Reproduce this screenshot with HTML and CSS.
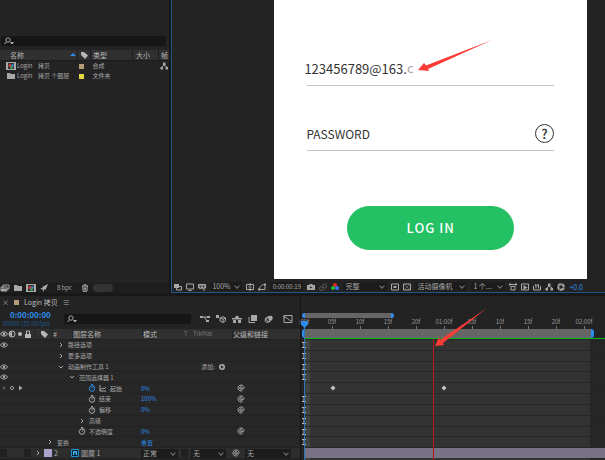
FILE: index.html
```html
<!DOCTYPE html>
<html lang="zh-CN">

<head>
  <meta charset="UTF-8">
  <meta name="viewport" content="width=device-width, initial-scale=1.0">
  <title>Login 拷贝</title>
  <link rel="stylesheet" href="styles.css">
</head>

<body>
  <svg class="sprite" aria-hidden="true">
    <symbol id="search" viewBox="0 0 10 8"><circle cx="4" cy="3" r="2.2"/><path d="M2.5 4.6L.5 7M6.5 5.5h3L8 7z"/></symbol>
    <symbol id="eye" viewBox="0 0 8 8"><path d="M.5 4C2 1.3 6 1.3 7.500 4C6 6.700 2 6.700 .5 4z"/><circle class="solid" cx="4" cy="4" r="1.200"/></symbol>
    <symbol id="tag" viewBox="0 0 8 8"><path class="solid" d="M1 1h3l4 3.500L5 8L1 4z"/></symbol>
    <symbol id="right" viewBox="0 0 8 8"><path d="M3 2l2 2-2 2"/></symbol>
    <symbol id="down" viewBox="0 0 8 8"><path d="M2 3l2 2 2-2"/></symbol>
    <symbol id="watch" viewBox="0 0 8 8"><circle cx="4" cy="4.600" r="2.700"/><path d="M3 .6h2M4 .6v1.300M4 4.600l1-1.500M6 1.500l.8.8"/></symbol>
    <symbol id="spiral" viewBox="0 0 8 8"><path d="M5.300 4A1.300 1.300 0 1 1 4 2.700C5 2.700 5.300 3.500 5.200 4.500C5.600 5.500 7 5 7 3.500C6.800 1.800 5.600 1 4 1A3 3 0 1 0 5.500 6.600"/></symbol>
    <symbol id="tree" viewBox="0 0 8 8"><path class="solid" d="M3 .5h2.500V3H3zM.5 5H3v2.500H.5zM5.500 5H8v2.500H5.500z"/><path d="M4 3L2 5M4 3l3 2"/></symbol>
    <symbol id="folder" viewBox="0 0 8 8"><path class="solid" d="M0 1h3l1 1h4v5H0z"/></symbol>
    <symbol id="comp" viewBox="0 0 10 8"><path class="solid" d="M0 0h10v8H0z"/><path fill="#333" stroke="none" d="M2 1h6v6H2z"/><circle cx="4" cy="3.500" r="1.500" fill="#d33" stroke="none"/><circle cx="6.500" cy="3.500" r="1.300" fill="#38c" stroke="none"/><circle cx="5.500" cy="5.500" r="1.300" fill="#3a6" stroke="none"/></symbol>
    <symbol id="ibeam" viewBox="0 0 4 8"><path d="M0 1.500h4M0 6.500h4M2 1.500v5"/></symbol>
    <symbol id="diamond" viewBox="0 0 6 6"><path class="solid" d="M3 .5L5.500 3L3 5.500L.5 3z"/></symbol>
  </svg>

  <main class="workspace">
    <section class="project">
      <label class="search project-search">
        <svg class="wide"><use href="#search"/></svg>
        <input type="search" aria-label="搜索项目">
      </label>
      <table class="files">
        <thead>
          <tr>
            <th class="col-name"><span>名称</span><i class="sort"></i></th>
            <th class="col-tag"><svg><use href="#tag"/></svg></th>
            <th class="col-type">类型</th>
            <th class="col-size">大小</th>
            <th class="col-frame">帧</th>
          </tr>
        </thead>
        <tbody>
          <tr>
            <td><span class="file"><svg class="wide"><use href="#comp"/></svg><b>Login</b>拷贝</span></td>
            <td><i class="swatch tan"></i></td>
            <td>合成</td>
            <td></td>
            <td><svg><use href="#tree"/></svg></td>
          </tr>
          <tr>
            <td><span class="file"><svg class="wide"><use href="#folder"/></svg><b>Login</b>拷贝 个图层</span></td>
            <td><i class="swatch yellow"></i></td>
            <td>文件夹</td>
            <td></td>
            <td></td>
          </tr>
        </tbody>
      </table>
      <footer class="project-bar">
        <button aria-label="解释素材"><svg class="wide" viewBox="0 0 10 8"><path d="M3 1h6v4H3zM1 3h6v4H1z"/><path class="solid" d="M1 5h5v2H1z"/></svg></button>
        <button aria-label="新建文件夹"><svg><use href="#folder"/></svg></button>
        <button aria-label="新建合成"><svg class="wide"><use href="#comp"/></svg></button>
        <button aria-label="项目设置"><svg viewBox="0 0 8 8"><path class="solid" d="M8 0L5.500 6L4.500 5L3 8L2.500 5.500L0 4.500L3 3.800L2 3z"/></svg></button>
        <button class="depth-button">8 bpc</button>
        <button aria-label="删除"><svg viewBox="0 0 8 8"><path d="M1 2h6M3 2V.7h2V2M1.700 2l.4 5.300h3.800L6.300 2M3.300 3.300v3M4.700 3.300v3"/></svg></button>
        <i class="pill"></i>
      </footer>
    </section>

    <section class="viewer">
      <div class="stage">
        <form class="login">
          <div class="field">
            <input class="email" type="text" aria-label="Email" value="123456789@163."><span class="typing">c</span>
          </div>
          <div class="field">
            <input class="password" type="password" aria-label="Password" placeholder="PASSWORD">
            <button class="help" type="button" aria-label="Help">?</button>
          </div>
          <button class="submit" type="button">LOG IN</button>
        </form>
        <svg class="arrow arrow-email" viewBox="0 0 74 32"><path d="M0 30L6 23L8 25.500L74 0L10 29L11 31z"/></svg>
      </div>
      <footer class="viewer-bar">
        <button aria-label="始终预览"><svg viewBox="0 0 8 8"><path class="solid" d="M0 1h5v4H0z"/><path d="M2.500 3.500h5v3.500h-5z"/></svg></button>
        <button aria-label="主查看器"><svg viewBox="0 0 8 8"><path d="M.5 1h7v5h-7zM2.500 7.500h3"/></svg></button>
        <button aria-label="VR 视图"><svg viewBox="0 0 8 8"><path d="M.5 1.500h7v3.500h-7z"/><circle cx="2.500" cy="4" r="1.500"/><circle cx="5.500" cy="4" r="1.500"/><path class="solid" d="M4.500 6.500h3L6 8z"/></svg></button>
        <span class="select zoom"><select aria-label="放大率"><option>100%</option></select></span>
        <button aria-label="网格"><svg viewBox="0 0 8 8"><path d="M.5 1.500h7v5h-7zM4 0v3M4 5v3M2.500 4h3"/></svg></button>
        <button aria-label="蒙版"><svg viewBox="0 0 8 8"><path d="M2 6.500C1.500 4 3 1.500 7 1.500v5z"/><path class="solid" d="M0 5.500h2v2H0zM6 .5h2v2H6z"/></svg></button>
        <button class="time-small">0:00:00:19</button>
        <button aria-label="快照"><svg viewBox="0 0 8 8"><path class="solid" d="M0 2h2l1-1h2l1 1h2v5H0z"/><circle cx="4" cy="4.500" r="1.400" fill="#222"/></svg></button>
        <button class="dim" aria-label="显示快照"><svg viewBox="0 0 8 8"><circle cx="2.500" cy="5.500" r="2"/><circle cx="5.500" cy="3" r="2"/></svg></button>
        <button aria-label="通道"><svg viewBox="0 0 8 8"><g stroke="none"><circle cx="4" cy="2" r="2" fill="#e22"/><circle cx="2" cy="5" r="2" fill="#2b3"/><circle cx="6" cy="5" r="2" fill="#37f"/></g></svg></button>
        <span class="select quality"><select aria-label="分辨率"><option>完整</option></select></span>
        <button aria-label="目标区域"><svg viewBox="0 0 8 8"><path d="M.5 1h7v6h-7z"/><path class="solid" d="M2.500 3h3v2h-3z"/></svg></button>
        <button aria-label="透明网格"><svg viewBox="0 0 8 8"><path d="M.5 1h7v6h-7z"/><path class="dim" d="M1 1l6 6M7 1L1 7"/></svg></button>
        <span class="select camera"><select aria-label="3D 视图"><option>活动摄像机</option></select></span>
        <span class="select views"><select aria-label="视图布局"><option>1 个...</option></select></span>
        <button aria-label="像素长宽比"><svg viewBox="0 0 8 8"><path d="M0 1.500h8M1 0v3M7 0v3M2 3.500h4v3.500H2z"/></svg></button>
        <button aria-label="快速预览"><svg viewBox="0 0 8 8"><path d="M.5 1h7v6h-7z"/><path class="solid" d="M2.500 2v5L6.500 4.500z"/></svg></button>
        <button aria-label="时间轴"><svg viewBox="0 0 8 8"><path d="M.5 3v4h7V3M3 1.500v4M5.500 1.500v4M2 3l1-2M4.500 3l1-2"/></svg></button>
        <button aria-label="流程图"><svg><use href="#tree"/></svg></button>
        <button class="exposure" aria-label="重置曝光"><svg viewBox="0 0 8 8"><circle cx="4" cy="4" r="2.700" stroke-width="2"/><path stroke="#222" stroke-width=".5" d="M4 0l1 3M8 4L5 5M2 8l1-3M0 3l3 0"/></svg></button>
        <a href="#exposure">+0.0</a>
      </footer>
    </section>
  </main>

  <section class="timeline">
    <div class="layers">
      <header class="tab">
        <span>×</span><i class="swatch tan"></i><h1>Login 拷贝</h1><span>≡</span>
      </header>
      <div class="tools">
        <div class="clock">
          <strong>0:00:00:00</strong>
          <span>00000 (25.00 fps)</span>
        </div>
        <label class="search layer-search">
          <svg class="wide"><use href="#search"/></svg>
          <input type="search" aria-label="搜索图层">
        </label>
        <div class="tool-icons">
          <button aria-label="微型流程图"><svg class="wide" viewBox="0 0 10 8"><path d="M1 2h3l3 4M4 2h4"/><path class="solid" d="M0 1h3v2H0zM7 1h3v2H7zM6 5h3v2H6z"/></svg></button>
          <button aria-label="草图 3D"><svg class="wide" viewBox="0 0 10 8"><path d="M4 3l3-1.300L9.500 3v3L7 7.500L4 6zM4 3l3 1.200L9.500 3M7 4.200v3"/><path class="solid" d="M0 0h3v3H0z"/></svg></button>
          <button aria-label="隐藏图层"><svg class="wide" viewBox="0 0 10 8"><path class="solid" d="M3 3c0-3 4-3 4 0zM0 3h10v1.500H0zM1 5h3v3H1zM6 5h3v3H6z"/></svg></button>
          <button aria-label="帧混合"><svg class="wide" viewBox="0 0 10 8"><path d="M1 2v5.500h6"/><path class="solid" d="M3 0h6v6H3z"/></svg></button>
          <button aria-label="运动模糊"><svg class="wide" viewBox="0 0 10 8"><circle cx="3.500" cy="5" r="2.500"/><circle cx="5" cy="4" r="2.500"/><circle class="solid" cx="6.500" cy="3" r="2.300"/></svg></button>
          <button class="graph" aria-label="图表编辑器"><svg class="wide" viewBox="0 0 10 8"><path d="M1 .5h8v7H1zM1.500 2C4 2 6 6 8.500 6M0 1l2 2"/></svg></button>
        </div>
      </div>
      <div class="columns">
        <span class="switches"><svg><use href="#eye"/></svg><svg viewBox="0 0 8 8"><circle cx="4" cy="4" r="3"/><path class="solid" d="M1 4l3-3v6z"/></svg><svg viewBox="0 0 8 8"><circle class="solid" cx="4" cy="4" r="2"/></svg><svg viewBox="0 0 8 8"><path class="solid" d="M1 4h6v4H1z"/><path d="M2.500 4V1h3v3"/></svg></span>
        <span class="label"><svg><use href="#tag"/></svg></span>
        <span>#</span>
        <span>图层名称</span>
        <span>模式</span>
        <span class="faint">T</span>
        <span class="faint">TrkMat</span>
        <span>父级和链接</span>
      </div>
      <div class="rows">
        <div class="row">
          <span class="switches"><svg><use href="#eye"/></svg></span>
          <span class="prop depth-1"><svg><use href="#right"/></svg>路径选项</span>
        </div>
        <div class="row">
          <span class="switches"></span>
          <span class="prop depth-1"><svg><use href="#right"/></svg>更多选项</span>
        </div>
        <div class="row">
          <span class="switches"><svg><use href="#eye"/></svg></span>
          <span class="prop depth-1"><svg><use href="#down"/></svg>动画制作工具 1</span>
          <span class="value add">添加: <svg viewBox="0 0 8 8"><circle class="solid" cx="4" cy="4" r="3"/><path fill="#222" stroke="none" d="M3 2.200L5.800 4L3 5.800z"/></svg></span>
        </div>
        <div class="row">
          <span class="switches"><svg><use href="#eye"/></svg></span>
          <span class="prop depth-2"><svg><use href="#down"/></svg>范围选择器 1</span>
        </div>
        <div class="row">
          <span class="switches keys"><svg class="dim" viewBox="0 0 8 8"><path class="solid" d="M5 2v4L2 4z"/></svg><svg viewBox="0 0 8 8"><path d="M4 2l2 2-2 2-2-2z"/></svg><svg viewBox="0 0 8 8"><path class="solid" d="M3 1.500v5L6.500 4z"/></svg></span>
          <span class="prop depth-4"><svg class="on"><use href="#watch"/></svg><svg viewBox="0 0 8 8"><path d="M1 1v6h6M1.500 6l2-2 1.500 1 2-2"/></svg>起始</span>
          <span class="value"><a href="#start">0%</a></span>
          <span class="parent"><svg><use href="#spiral"/></svg></span>
        </div>
        <div class="row">
          <span class="switches"></span>
          <span class="prop depth-4"><svg><use href="#watch"/></svg>结束</span>
          <span class="value"><a href="#end">100%</a></span>
          <span class="parent"><svg><use href="#spiral"/></svg></span>
        </div>
        <div class="row">
          <span class="switches"></span>
          <span class="prop depth-4"><svg><use href="#watch"/></svg>偏移</span>
          <span class="value"><a href="#offset">0%</a></span>
          <span class="parent"><svg><use href="#spiral"/></svg></span>
        </div>
        <div class="row">
          <span class="switches"></span>
          <span class="prop depth-3"><svg><use href="#right"/></svg>高级</span>
        </div>
        <div class="row">
          <span class="switches"></span>
          <span class="prop depth-3"><svg><use href="#watch"/></svg>不透明度</span>
          <span class="value"><a href="#opacity">0%</a></span>
          <span class="parent"><svg><use href="#spiral"/></svg></span>
        </div>
        <div class="row">
          <span class="switches"></span>
          <span class="prop depth-0"><svg><use href="#right"/></svg>变换</span>
          <span class="value"><a href="#reset">重置</a></span>
        </div>
        <div class="row layer">
          <span class="switches"><i class="slot"></i><i class="slot last"></i></span>
          <span class="prop"><svg><use href="#right"/></svg><i class="layer-color"></i><em>2</em><svg class="psd" viewBox="0 0 8 8"><path fill="#0b2a40" stroke="#1d8fd0" d="M.5.5h7v7h-7z"/><path stroke="#49b4ee" d="M2.500 6V2.500h3V4h-3M5.500 4v2"/></svg>圖層 1</span>
          <span class="value"><span class="select mode"><select aria-label="模式"><option>正常</option></select></span><i class="slot"></i><span class="select matte"><select aria-label="轨道遮罩"><option>无</option></select></span></span>
          <span class="parent"><svg><use href="#spiral"/></svg><span class="select link"><select aria-label="父级"><option>无</option></select></span></span>
        </div>
      </div>
    </div>

    <div class="time">
      <div class="navigator"></div>
      <div class="ruler">
        <span>:00f</span><span>05f</span><span>10f</span><span>15f</span><span>20f</span><span>01:00f</span><span>05f</span><span>10f</span><span>15f</span><span>20f</span><span>02:00f</span>
      </div>
      <div class="work-area"></div>
      <div class="tracks">
        <div class="track"><svg class="ibeam"><use href="#ibeam"/></svg></div>
        <div class="track"><svg class="ibeam"><use href="#ibeam"/></svg></div>
        <div class="track"><svg class="ibeam"><use href="#ibeam"/></svg></div>
        <div class="track"><svg class="ibeam"><use href="#ibeam"/></svg></div>
        <div class="track"><svg class="key key-5"><use href="#diamond"/></svg><svg class="key key-25"><use href="#diamond"/></svg></div>
        <div class="track"><svg class="ibeam"><use href="#ibeam"/></svg></div>
        <div class="track"><svg class="ibeam"><use href="#ibeam"/></svg></div>
        <div class="track"><svg class="ibeam"><use href="#ibeam"/></svg></div>
        <div class="track"><svg class="ibeam"><use href="#ibeam"/></svg></div>
        <div class="track"><svg class="ibeam"><use href="#ibeam"/></svg></div>
        <div class="track clip"></div>
        <div class="preview-line"></div>
      </div>
      <div class="playhead"></div>
      <svg class="arrow arrow-time" viewBox="0 0 52 38"><path d="M0 38L4 29L5 32L52 0L8 35L9 37z"/></svg>
    </div>
  </section>
</body>

</html>
```

FILE: styles.css
```css
* {
  box-sizing: border-box;
}

body {
  margin: 0;
  height: 100vh;
  display: grid;
  grid-template-rows: 293fr 167fr;
  overflow: hidden;
  background: #181818;
  color: #a8a8a8;
  font: 7px/10px "Noto Sans CJK SC", sans-serif;
}

button, input, select {
  margin: 0;
  padding: 0;
  border: 0;
  background: none;
  color: inherit;
  font: inherit;
  outline: none;
}

a {
  color: #2d8ceb;
  text-decoration: none;
}

svg {
  display: block;
  flex: none;
  width: 8px;
  height: 8px;
  fill: none;
  stroke: currentColor;
  stroke-width: 1;
}

svg.wide {
  width: 10px;
}

.solid {
  fill: currentColor;
  stroke: none;
}

.sprite {
  position: absolute;
  width: 0;
  height: 0;
}

.dim {
  opacity: 0.4;
}

.search {
  display: flex;
  align-items: center;
  height: 10px;
  padding-left: 3px;
  background: #161616;
  border-radius: 2px;
}

.search input {
  flex: 1;
  min-width: 0;
  height: 10px;
}

.swatch {
  display: block;
  width: 5px;
  height: 5px;
}

.tan {
  background: #b39b78;
}

.yellow {
  background: #e4d83c;
}

.select {
  position: relative;
  display: block;
  height: 9px;
  background: #1c1c1c;
}

.select select {
  display: block;
  appearance: none;
  width: 100%;
  height: 9px;
  padding-left: 2px;
  line-height: 9px;
}

.select::after {
  content: "";
  position: absolute;
  right: 3px;
  top: 2px;
  width: 3px;
  height: 3px;
  border: solid #777;
  border-width: 0 1px 1px 0;
  transform: rotate(45deg);
  pointer-events: none;
}

/* project panel */
.workspace {
  display: flex;
  gap: 2px;
  min-height: 0;
}

.project {
  display: flex;
  flex-direction: column;
  width: 28%;
  background: #232323;
}

.project-search {
  margin: 36px 3px 4px 1px;
}

.files {
  width: 100%;
  border-collapse: collapse;
  table-layout: fixed;
  font-size: 6px;
}

.files th {
  height: 10px;
  padding: 0;
  border-bottom: 1px solid #1c1c1c;
  background: #303030;
  color: #b8b8b8;
  font-size: 7px;
  font-weight: normal;
  text-align: left;
  line-height: 10px;
}

.files th + th {
  border-left: 1px solid #1c1c1c;
}

.files td {
  height: 10px;
  padding: 0 0 0 2px;
  line-height: 10px;
}

.files .col-name {
  padding-left: 10px;
}

.col-name span {
  display: inline-block;
  width: 60px;
}

.sort {
  display: inline-block;
  border: solid transparent;
  border-width: 0 3px 3px;
  border-bottom-color: #2d8ceb;
  vertical-align: 2px;
}

.files .col-tag {
  width: 13px;
  padding-left: 2px;
}

.files .col-type {
  width: 42px;
  padding-left: 2px;
}

.files .col-size {
  width: 26px;
  padding-left: 3px;
}

.files .col-frame {
  width: 11px;
  padding-left: 2px;
  overflow: hidden;
}

.file {
  display: flex;
  align-items: center;
  padding-left: 4px;
  white-space: nowrap;
}

.file b {
  width: 22px;
  padding-left: 1px;
  font-weight: normal;
}

.project-bar {
  display: flex;
  align-items: center;
  gap: 4px;
  height: 10px;
  margin-top: auto;
  background: #1e1e1e;
}

.depth-button {
  width: 25px;
  font-size: 6px;
  line-height: 8px;
}

.pill {
  width: 20px;
  height: 8px;
  border-radius: 4px;
  background: #333;
}

/* composition viewer */
.viewer {
  flex: 1;
  min-width: 0;
  display: flex;
  flex-direction: column;
  border: solid #20568c;
  border-width: 0 0 1px 1px;
  background: #232323;
}

.stage {
  position: relative;
  flex: 1;
  margin: 0 18px 2px 102px;
  background: #fff;
  color: #333;
}

.login {
  display: flex;
  flex-direction: column;
  padding: 55px 33px 0;
}

.field {
  display: flex;
  align-items: center;
  height: 31px;
  margin-bottom: 34px;
  padding-bottom: 4px;
  border-bottom: 1px solid #c4c4c4;
}

.email {
  field-sizing: content;
  height: 24px;
  margin-left: -3px;
  font-size: 13px;
}

.typing {
  color: #aaa;
  font-size: 13px;
}

.password {
  flex: 1;
  min-width: 0;
  height: 24px;
  margin-left: -1px;
  font-size: 12px;
}

.password::placeholder {
  color: #333;
  opacity: 1;
}

.help {
  width: 19px;
  height: 19px;
  border: 1px solid #333;
  border-radius: 50%;
  font-size: 13px;
  font-weight: 500;
  line-height: 17px;
}

.submit {
  height: 44px;
  margin: 21px 40px 0;
  border-radius: 22px;
  background: #23c064;
  color: #fff;
  font-size: 13px;
  font-weight: 500;
  letter-spacing: 1px;
}

.arrow {
  position: absolute;
  fill: #fb3b36;
  stroke: none;
}

.arrow-email {
  left: 144px;
  top: 40px;
  width: 74px;
  height: 32px;
}

.viewer-bar {
  display: flex;
  align-items: center;
  gap: 4px;
  height: 11px;
  padding-left: 2px;
  white-space: nowrap;
}

.zoom {
  width: 32px;
}

.time-small {
  width: 33px;
  background: #1c1c1c;
  font-size: 6px;
  line-height: 9px;
}

.quality {
  width: 44px;
}

.camera {
  width: 52px;
}

.views {
  width: 34px;
}

.exposure {
  margin-left: -2px;
  padding-left: 1px;
  border-left: 1px solid #111;
}

/* timeline */
.timeline {
  display: flex;
  min-height: 0;
  padding-top: 3px;
}

.layers {
  display: flex;
  flex-direction: column;
  width: 300px;
  background: #232323;
}

.tab {
  display: flex;
  align-items: center;
  gap: 5px;
  height: 12px;
  padding-left: 2px;
}

.tab h1 {
  margin: 0;
  color: #bbb;
  font-size: 7px;
  font-weight: normal;
}

.tools {
  display: flex;
  align-items: center;
  height: 21px;
}

.clock {
  width: 64px;
  padding-left: 3px;
  color: #205a94;
}

.clock strong {
  display: block;
  padding-left: 7px;
  color: #2d8ceb;
  font-size: 8px;
  font-weight: 700;
}

.clock span {
  display: block;
  font-size: 6px;
  line-height: 7px;
}

.layer-search {
  width: 127px;
}

.tool-icons {
  display: flex;
  gap: 6px;
  padding-left: 9px;
}

.graph {
  margin-left: 3px;
}

.columns {
  display: grid;
  grid-template-columns: 34px 18px 20px 70px 42px 9px 39px 1fr;
  align-items: center;
  height: 10px;
  background: #303030;
  color: #b8b8b8;
  white-space: nowrap;
}

.columns > span {
  border-left: 1px solid #222;
}

.columns > .switches,
.columns > .faint {
  border-left: 0;
}

.columns > .label {
  padding-left: 5px;
}

.faint {
  color: #777;
  font-size: 6px;
}

.switches {
  display: flex;
}

.rows,
.tracks {
  flex: 1;
  min-height: 0;
  display: grid;
  grid-template-rows: repeat(11, 1fr);
  padding-bottom: 2px;
}

.row {
  display: grid;
  grid-template-columns: 34px 107px 91px 1fr;
  align-items: center;
  min-height: 0;
  border-top: 1px solid #222;
  background: #272727;
  font-size: 6px;
  line-height: 9px;
  white-space: nowrap;
}

.prop,
.value,
.parent {
  display: flex;
  align-items: center;
  gap: 3px;
}

.depth-0 {
  padding-left: 12px;
}

.depth-1 {
  padding-left: 23px;
}

.depth-2 {
  padding-left: 34px;
}

.depth-3 {
  padding-left: 44px;
}

.depth-4 {
  padding-left: 54px;
}

.on {
  color: #2d8ceb;
}

.parent {
  padding-left: 5px;
}

.add {
  justify-content: flex-end;
  padding-right: 6px;
}

.layer {
  background: #2d2d2d;
  font-size: 7px;
}

.layer .parent {
  gap: 5px;
  padding-left: 0;
}

.layer .prop {
  gap: 2px;
}

.layer em {
  width: 15px;
  font-style: normal;
}

.layer-color {
  width: 8px;
  height: 8px;
  background: #aaa4cc;
}

.slot {
  width: 7px;
  height: 8px;
  background: #202020;
}

.last {
  margin-left: 17px;
}

.mode {
  width: 37px;
}

.matte {
  width: 35px;
}

.link {
  width: 46px;
}

/* time ruler and tracks */
.time {
  position: relative;
  flex: 1;
  min-width: 0;
  display: flex;
  flex-direction: column;
  padding: 17px 0 0 4px;
  background: #232323;
  border-left: 1px solid #151515;
}

.navigator,
.work-area {
  margin-left: -3px;
  border: solid #2d8ceb;
  border-width: 0 3px;
  border-radius: 3px;
  background: #666;
}

.navigator {
  width: 92px;
  height: 5px;
}

.ruler {
  display: flex;
  height: 11px;
  margin-left: -15px;
  font-size: 6px;
  line-height: 8px;
  color: #999;
}

.ruler span {
  flex: 0 0 28px;
  text-align: center;
  background: linear-gradient(#777, #777) center bottom / 1px 3px no-repeat;
}

.work-area {
  width: 292px;
  height: 9px;
}

.tracks {
  position: relative;
  margin-left: -1px;
  border-top: 1px solid #0cb41c;
  background: linear-gradient(90deg, #424242 6px, #333 6px, #333 286px, #262626 286px);
}

.track {
  position: relative;
  min-height: 0;
  border-top: 1px solid #272727;
}

.ibeam {
  width: 4px;
  height: 8px;
  margin: 1px 0 0 -2px;
  color: #bbb;
}

.key {
  position: absolute;
  top: 2px;
  width: 6px;
  height: 6px;
  color: #c4c4c4;
}

.key-5 {
  left: 26px;
}

.key-25 {
  left: 137px;
}

.clip {
  background: #777286;
}

.preview-line {
  position: absolute;
  left: 129px;
  top: 0;
  bottom: 0;
  width: 1px;
  background: #b51818;
}

.playhead {
  position: absolute;
  left: 3px;
  top: 25px;
  bottom: 0;
  width: 1px;
  background: #2d76b8;
}

.playhead::before {
  content: "";
  position: absolute;
  left: -3px;
  top: 0;
  width: 7px;
  height: 7px;
  background: #2d8ceb;
  clip-path: polygon(0 0, 100% 0, 100% 50%, 50% 100%, 0 50%);
}

.arrow-time {
  left: 134px;
  top: 12px;
  width: 52px;
  height: 38px;
}
```
